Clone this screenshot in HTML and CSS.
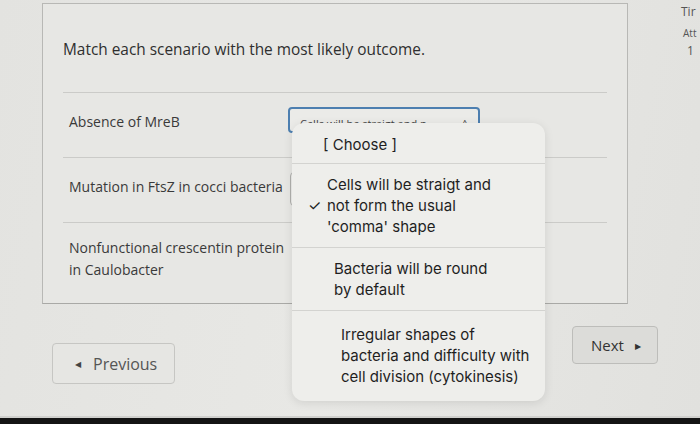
FILE: index.html
```html
<!DOCTYPE html>
<html lang="en">
<head>
<meta charset="utf-8">
<title>Quiz</title>
<link rel="stylesheet" href="styles.css">
</head>
<body>
<div class="screen">
  <div class="page">
    <div class="main">
      <div class="card">
        <p class="question">Match each scenario with the most likely outcome.</p>
        <div class="rows">
          <div class="row">
            <div class="label">Absence of MreB</div>
            <div class="select focused"><span class="sel-text">Cells will be straigt and n...</span><span class="caret">^</span></div>
          </div>
          <div class="row">
            <div class="label">Mutation in FtsZ in cocci bacteria</div>
            <div class="select"><span class="sel-text"></span></div>
          </div>
          <div class="row row-tall">
            <div class="label label-top">Nonfunctional crescentin protein<br>in Caulobacter</div>
            <div class="select select-tall"><span class="sel-text"></span></div>
          </div>
        </div>
      </div>
      <div class="footer">
        <button class="btn btn-prev"><span class="tri">&#9664;</span>Previous</button>
        <button class="btn btn-next">Next<span class="tri">&#9654;</span></button>
      </div>
    </div>
    <aside class="side">
      <div class="side-t">Tir</div>
      <div class="side-a">Att</div>
      <div class="side-n">1</div>
    </aside>
    <div class="dropdown">
      <div class="opt opt-choose">[ Choose ]</div>
      <div class="opt opt-sel"><span class="check">&#10003;</span>Cells will be straigt and<br>not form the usual<br>'comma' shape</div>
      <div class="opt opt-mid">Bacteria will be round<br>by default</div>
      <div class="opt opt-last">Irregular shapes of<br>bacteria and difficulty with<br>cell division (cytokinesis)</div>
    </div>
  </div>
  <div class="bezel"></div>
</div>
</body>
</html>
```

FILE: styles.css
```css
* { box-sizing: border-box; }
html, body { margin: 0; padding: 0; }
body {
  width: 700px;
  height: 424px;
  overflow: hidden;
  background: #e2e2df;
  font-family: "Open Sans", "Liberation Sans", sans-serif;
}
.screen {
  display: flex;
  flex-direction: column;
  height: 424px;
}
.page {
  position: relative;
  flex: 1;
  display: flex;
  background: linear-gradient(100deg, #e3e3e0 0%, #e8e8e5 50%, #e1e1de 100%);
}
.main {
  width: 668px;
  padding-top: 3px;
}
.card {
  margin-left: 42px;
  width: 586px;
  border: 1px solid #b8b8b5;
  border-bottom-color: #a9a9a6;
  background: #e7e7e4;
  padding: 36px 20px 0 20px;
}
.question {
  margin: 0 0 32px 0;
  font-size: 15.4px;
  line-height: 20px;
  color: #2f2f2f;
}
.rows {
  display: flex;
  flex-direction: column;
}
.row {
  display: flex;
  align-items: flex-start;
  height: 65px;
  padding: 14px 0 0 6px;
  border-top: 1px solid #cbcbc8;
}
.row-tall { height: 81px; padding-top: 14px; }
.label {
  width: 219px;
  margin-top: 6px;
  font-size: 14px;
  line-height: 18px;
  color: #3a3a3a;
}
.label-top {
  margin-top: 0;
  line-height: 22px;
  width: 226px;
}
.select {
  width: 192px;
  height: 34px;
  border: 1px solid #b0b0ad;
  border-radius: 4px;
  background: #ebebe8;
  margin-left: 2px;
  display: flex;
  align-items: center;
  padding: 0 10px;
  font-size: 11px;
  color: #444;
}
.select.focused {
  height: 26px;
  margin-left: 0;
  margin-top: 0;
  border: 2px solid #4d7fb0;
  align-items: flex-end;
  justify-content: space-between;
}
.select-tall { height: 40px; }
.sel-text { white-space: nowrap; overflow: hidden; }
.caret { font-size: 11px; }
.footer {
  display: flex;
  justify-content: space-between;
  align-items: flex-start;
  padding: 22px 10px 0 52px;
}
.btn {
  font-family: "Open Sans", "Liberation Sans", sans-serif;
  border: 1px solid #c6c6c3;
  border-radius: 4px;
  background: #e6e6e3;
  color: #555;
  display: flex;
  align-items: center;
  cursor: pointer;
}
.btn-prev {
  margin-top: 17px;
  width: 123px;
  height: 41px;
  padding: 0 0 0 22px;
  font-size: 16px;
}
.btn-prev .tri { font-size: 8px; margin-right: 12px; color: #444; }
.btn-next {
  width: 86px;
  height: 38px;
  padding: 0 0 0 18px;
  font-size: 15px;
  color: #333;
  background: #dcdcd9;
  border-color: #bdbdba;
}
.btn-next .tri { font-size: 8px; margin-left: 11px; color: #333; }
.side {
  flex: 1;
  padding: 4px 0 0 13px;
  color: #555;
  white-space: nowrap;
}
.side-t { font-size: 12px; line-height: 16px; }
.side-a { font-size: 10px; line-height: 14px; margin-top: 6px; padding-left: 2px; }
.side-n { font-size: 12px; line-height: 14px; margin-top: 4px; padding-left: 6px; }
.dropdown {
  position: absolute;
  left: 292px;
  top: 123px;
  width: 253px;
  background: #eeeeeb;
  border-radius: 12px;
  box-shadow: 0 2px 10px rgba(0,0,0,0.10);
  font-family: "Inter", "Roboto", "Liberation Sans", sans-serif;
  font-size: 15px;
  color: #1f1f1f;
}
.opt {
  position: relative;
  padding: 10px 8px 10px 38px;
  line-height: 21px;
  border-top: 1px solid #d3d3d0;
}
.opt-choose {
  border-top: none;
  padding-top: 11px;
  padding-bottom: 8px;
  padding-left: 31px;
}
.opt-sel { padding-left: 35px; }
.opt-mid { padding-left: 42px; }
.opt-last { padding-top: 13px; padding-bottom: 14px; padding-left: 49px; }
.check {
  position: absolute;
  left: 16px;
  top: 31px;
  font-size: 15px;
}
.bezel {
  height: 8px;
  background: #141414;
  border-top: 2px solid #d0d0cd;
}
```
